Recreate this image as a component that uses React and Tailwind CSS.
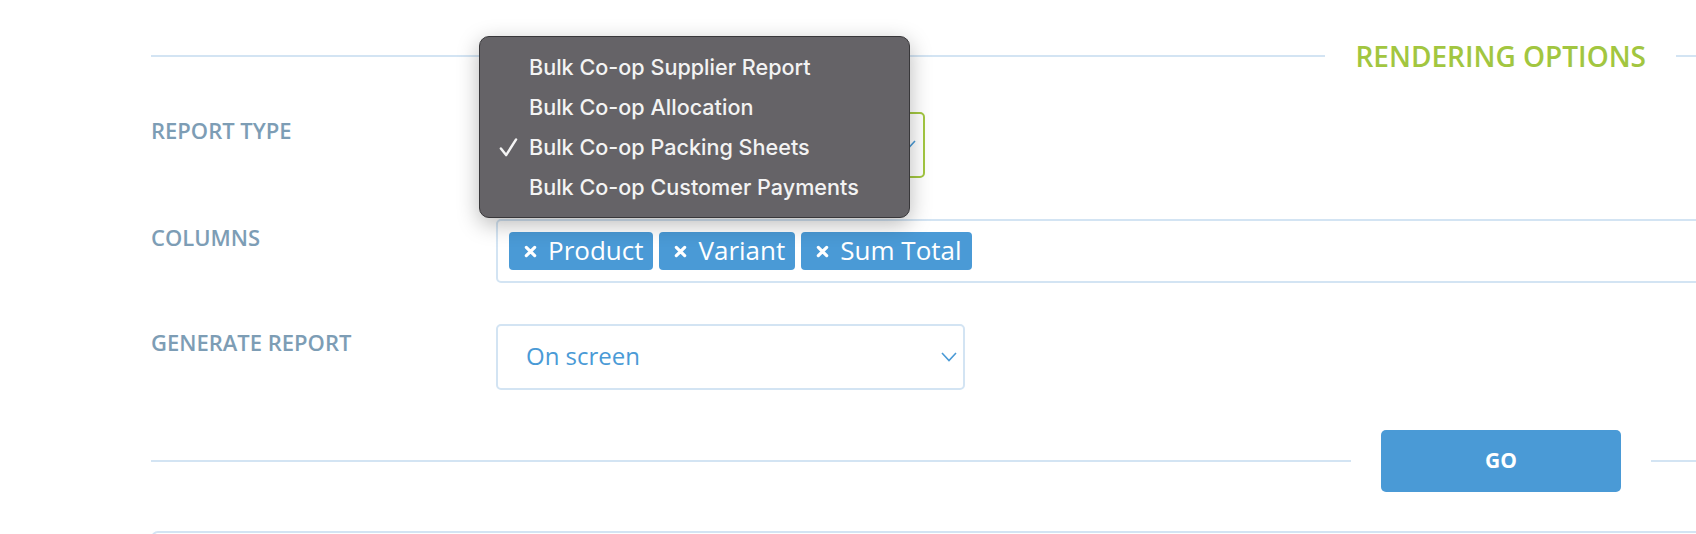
import React from "react";

const reportTypes = [
  "Bulk Co-op Supplier Report",
  "Bulk Co-op Allocation",
  "Bulk Co-op Packing Sheets",
  "Bulk Co-op Customer Payments",
];

const columns = ["Product", "Variant", "Sum Total"];

const Chevron = ({ className }) => (
  <svg viewBox="0 0 16 10" className={className} fill="none">
    <polyline points="1,1 8,8.5 15,1" stroke="#4a9ad6" strokeWidth="1.6" />
  </svg>
);

const Check = () => (
  <svg viewBox="0 0 20 20" className="absolute left-[19px] top-[11px] h-[19px] w-[19px]" fill="none">
    <polyline
      points="2,11 7.5,18 18,1.5"
      stroke="#f4f4f4"
      strokeWidth="2.6"
      strokeLinecap="round"
      strokeLinejoin="round"
    />
  </svg>
);

const Tag = ({ label }) => (
  <div className="flex h-[38px] items-center rounded-[4px] bg-[#4a9ad6] pl-[15px] pr-[10px] text-[26px] leading-none text-white">
    <svg viewBox="0 0 14 14" className="h-[13px] w-[13px]" fill="none">
      <path d="M2.5 2.5 L11.5 11.5 M11.5 2.5 L2.5 11.5" stroke="white" strokeWidth="3.4" strokeLinecap="round" />
    </svg>
    <span className="ml-[11px] pb-[2px]">{label}</span>
  </div>
);

const Label = ({ children }) => (
  <div className="w-[345px] shrink-0 pt-[3px] text-[22px] font-semibold leading-[30px] text-[#7d9db5]">
    {children}
  </div>
);

const App = () => {
  return (
    <div className="relative h-[534px] w-full overflow-hidden bg-white font-['Open_Sans',sans-serif]">
      <div className="ml-[151px] w-[1610px] pt-[36px]">
        {/* Section header */}
        <div className="flex h-[40px] items-center">
          <div className="h-[2px] flex-1 bg-[#d3e4f3]" />
          <h2 className="px-[30px] text-[28px] font-semibold leading-none text-[#a2c640]">
            RENDERING OPTIONS
          </h2>
          <div className="h-[2px] w-[85px] bg-[#d3e4f3]" />
        </div>

        {/* Form rows */}
        <div className="mt-[36px] flex flex-col gap-[41px]">
          <div className="flex">
            <Label>REPORT TYPE</Label>
            <div className="relative flex h-[66px] w-[429px] items-center justify-between rounded-[5px] border-2 border-[#a3c741] pl-[28px] pr-[7px] text-[24px] text-[#4a9ad6]">
              <span className="invisible">Bulk Co-op Packing Sheets</span>
              <Chevron className="h-[10px] w-[16px]" />

              {/* Open native menu */}
              <div className="absolute -left-[19px] -top-[78px] z-10 w-[431px] rounded-[10px] border border-[#38373a] bg-[#656367] pb-[10px] pt-[10px] font-['Inter',sans-serif] text-[21.6px] font-medium text-[#f3f3f3] shadow-[0_6px_22px_rgba(0,0,0,0.28)]">
                {reportTypes.map((t) => (
                  <div key={t} className="relative flex h-[40px] items-center pl-[49px]">
                    {t === "Bulk Co-op Packing Sheets" && <Check />}
                    <span>{t}</span>
                  </div>
                ))}
              </div>
            </div>
          </div>

          <div className="flex">
            <Label>COLUMNS</Label>
            <div className="flex h-[64px] flex-1 items-center gap-[6px] rounded-[5px] border-2 border-[#d3e4f3] px-[11px]">
              {columns.map((c) => (
                <Tag key={c} label={c} />
              ))}
            </div>
          </div>

          <div className="flex">
            <Label>GENERATE REPORT</Label>
            <div className="flex h-[66px] w-[469px] items-center justify-between rounded-[5px] border-2 border-[#d3e4f3] pl-[28px] pr-[6px] text-[24px] text-[#4a9ad6]">
              <span className="pb-[2px]">On screen</span>
              <Chevron className="h-[10px] w-[16px]" />
            </div>
          </div>
        </div>

        {/* Submit */}
        <div className="mt-[40px] flex items-center">
          <div className="h-[2px] flex-1 bg-[#d3e4f3]" />
          <button className="mx-[30px] h-[62px] w-[240px] rounded-[5px] bg-[#4a9ad6] text-[21px] font-bold text-white">
            GO
          </button>
          <div className="h-[2px] w-[110px] bg-[#d3e4f3]" />
        </div>

        <div className="mt-[39px] h-[80px] rounded-[7px] border-2 border-[#d3e4f3]" />
      </div>
    </div>
  );
};

export default App;
